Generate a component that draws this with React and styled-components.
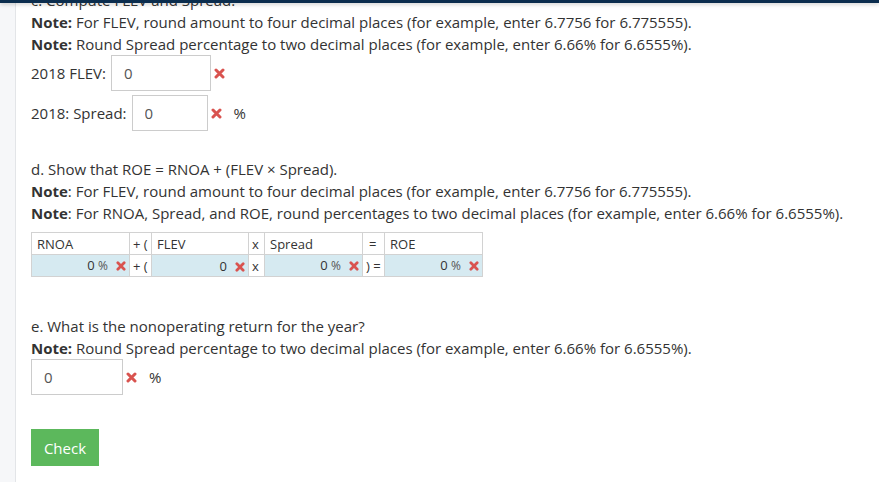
import React from "react";
import styled, { createGlobalStyle } from "styled-components";

const GlobalStyle = createGlobalStyle`
  html, body {
    margin: 0;
    padding: 0;
    background: #fff;
    overflow: hidden;
  }
  body {
    font-family: "Open Sans", "Liberation Sans", sans-serif;
    font-size: 15px;
    line-height: 22px;
    color: #333;
  }
`;

export default function App() {
  return (
    <>
      <GlobalStyle />
      <TopBar />
      <Page>
        <Side />
        <Main>
          {/* part c, scrolled under the bar */}
          <Cut>c. Compute FLEV and Spread.</Cut>
          <Line>
            <b>Note:</b> For FLEV, round amount to four decimal places (for example, enter 6.7756 for 6.775555).
          </Line>
          <Line>
            <b>Note:</b> Round Spread percentage to two decimal places (for example, enter 6.66% for 6.6555%).
          </Line>

          <Field>
            <Label>2018 FLEV:</Label>
            <Input $w={100} defaultValue="0" />
            <Wrong />
          </Field>
          <Field $gap={4}>
            <Label>2018: Spread:</Label>
            <Input $w={76} defaultValue="0" />
            <Wrong />
            <Unit>%</Unit>
          </Field>

          {/* part d */}
          <Line $top={27}>d. Show that ROE = RNOA + (FLEV × Spread).</Line>
          <Line>
            <b>Note</b>: For FLEV, round amount to four decimal places (for example, enter 6.7756 for 6.775555).
          </Line>
          <Line>
            <b>Note</b>: For RNOA, Spread, and ROE, round percentages to two decimal places (for example, enter 6.66% for 6.6555%).
          </Line>

          <Table>
            <colgroup>
              <col style={{ width: 98 }} />
              <col style={{ width: 22 }} />
              <col style={{ width: 97 }} />
              <col style={{ width: 16 }} />
              <col style={{ width: 98 }} />
              <col style={{ width: 22 }} />
              <col style={{ width: 98 }} />
            </colgroup>
            <tbody>
              <tr>
                <Head>RNOA</Head>
                <Op>+ (</Op>
                <Head>FLEV</Head>
                <Op>x</Op>
                <Head>Spread</Head>
                <Op $center>=</Op>
                <Head>ROE</Head>
              </tr>
              <tr>
                <Value>0 <Pct>%</Pct><Wrong $small /></Value>
                <Op>+ (</Op>
                <Value>0<Wrong $small /></Value>
                <Op>x</Op>
                <Value>0 <Pct>%</Pct><Wrong $small /></Value>
                <Op>) =</Op>
                <Value>0 <Pct>%</Pct><Wrong $small /></Value>
              </tr>
            </tbody>
          </Table>

          {/* part e */}
          <Line $top={38}>e. What is the nonoperating return for the year?</Line>
          <Line>
            <b>Note:</b> Round Spread percentage to two decimal places (for example, enter 6.66% for 6.6555%).
          </Line>
          <Field>
            <Input $w={92} defaultValue="0" />
            <Wrong />
            <Unit>%</Unit>
          </Field>

          <CheckButton>Check</CheckButton>
        </Main>
      </Page>
    </>
  );
}

function Wrong({ $small }) {
  const s = $small ? 10 : 11;
  return (
    <Cross $small={$small}>
      <svg width={s} height={s} viewBox="0 0 12 12">
        <path
          d="M2.2 2.2 L9.8 9.8 M9.8 2.2 L2.2 9.8"
          stroke="currentColor"
          strokeWidth="3.3"
          strokeLinecap="round"
          fill="none"
        />
      </svg>
    </Cross>
  );
}

const TopBar = styled.div`
  position: fixed;
  top: 0;
  left: 0;
  right: 0;
  height: 3px;
  background: #0b2d4e;
  box-shadow: 0 1px 4px rgba(0, 0, 0, 0.25);
  z-index: 10;
`;

const Page = styled.div`
  display: flex;
  min-height: 482px;
`;

const Side = styled.div`
  width: 15px;
  flex-shrink: 0;
  background: #f6f7f9;
  border-right: 1px solid #e3e5e8;
`;

const Main = styled.div`
  flex: 1;
  padding-left: 15px;
`;

const Cut = styled.div`
  margin-top: -11px;
`;

const Line = styled.div`
  margin-top: ${(p) => p.$top || 0}px;
  white-space: nowrap;

  b {
    font-weight: 700;
  }
`;

const Field = styled.div`
  display: flex;
  align-items: center;
  margin-top: ${(p) => p.$gap || 0}px;
`;

const Label = styled.span`
  margin-right: 5px;
`;

const Input = styled.input`
  box-sizing: border-box;
  width: ${(p) => p.$w}px;
  height: 36px;
  padding: 0 12px;
  border: 1px solid #ccc;
  border-radius: 0;
  font-family: inherit;
  font-size: 15px;
  color: #555;
  outline: none;
`;

const Cross = styled.span`
  display: inline-flex;
  align-items: center;
  vertical-align: -1px;
  color: #d9534f;
  margin-left: ${(p) => (p.$small ? 8 : 3)}px;
`;

const Unit = styled.span`
  margin-left: 12px;
`;

const Table = styled.table`
  margin-top: 8px;
  width: 451px;
  table-layout: fixed;
  border-collapse: collapse;
  font-size: 13px;
  line-height: 20px;
`;

const Head = styled.td`
  border: 1px solid #d2d2d2;
  padding: 0 5px;
  height: 21px;
  background: #fff;
`;

const Op = styled.td`
  border: 1px solid #d2d2d2;
  padding: 0 ${(p) => (p.$center ? 6 : 3)}px;
  height: 21px;
  white-space: nowrap;
  background: #fff;
`;

const Value = styled.td`
  border: 1px solid #d2d2d2;
  padding: 0 3px;
  height: 21px;
  text-align: right;
  white-space: nowrap;
  background: #d6eaf1;
`;

const Pct = styled.span`
  font-size: 12px;
  color: #555;
`;

const CheckButton = styled.button`
  display: block;
  margin-top: 34px;
  width: 68px;
  height: 37px;
  background: #5cb85c;
  border: 1px solid #5cb85c;
  border-radius: 0;
  color: #fff;
  font-family: inherit;
  font-size: 15px;
  cursor: pointer;
`;
